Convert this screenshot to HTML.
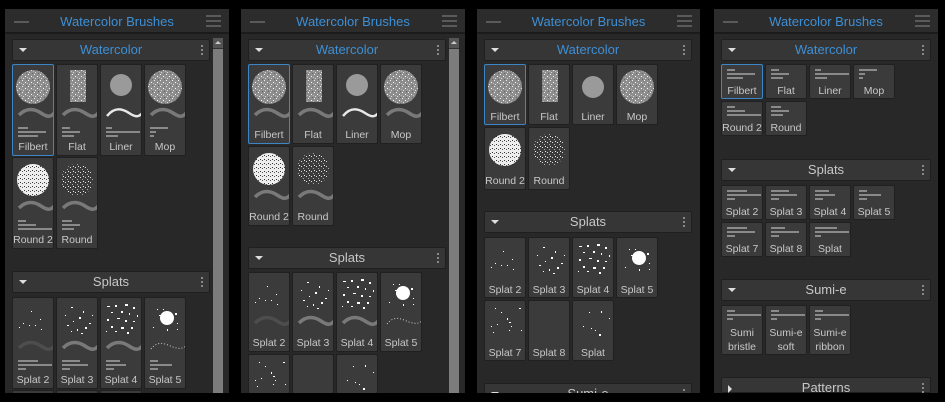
<!DOCTYPE html>
<html style="overflow:hidden;width:945px;height:402px"><head><meta charset="utf-8"><style>
*{margin:0;padding:0;box-sizing:border-box}
body{width:945px;height:402px;background:#000;position:relative;overflow:hidden;font-family:"Liberation Sans","DejaVu Sans",sans-serif}
.p{position:absolute;top:9px;height:384px;background:#282828;overflow:hidden}
.tb{position:absolute;left:0;right:0;top:0;height:25px;background:#2c2c2c;border-bottom:2px solid #1b1b1b}
.tt{position:absolute;left:0;right:0;top:5px;text-align:center;color:#3d8fd6;font-size:13px}
.mn{position:absolute;left:9px;top:12px;width:15px;height:2px;background:#5a5a5a}
.hm{position:absolute;right:8px;top:6px;width:15px;height:12px;border-top:2px solid #5a5a5a;border-bottom:2px solid #5a5a5a}
.hm:after{content:"";position:absolute;left:0;right:0;top:3px;height:2px;background:#5a5a5a}
.h{position:absolute;left:7px;height:22px;background:#363636;border:1px solid #1f1f1f;border-radius:2px;color:#c8c8c8;font-size:13px;text-align:center;line-height:20px}
.h.b{color:#3d8fd6}
.h i{position:absolute;left:6px;top:8px;width:0;height:0;border-left:4px solid transparent;border-right:4px solid transparent;border-top:4px solid #ddd}
.h i.r{border-top:4px solid transparent;border-bottom:4px solid transparent;border-left:4px solid #ddd;border-right:0;top:7px}
.h u{position:absolute;right:6px;top:5px;width:2px;height:2px;background:#888;box-shadow:0 4px #888,0 8px #888}
.t{position:absolute;width:42px;background:#3b3b3b;border:1px solid #202020;border-radius:2px;color:#c8c8c8;font-size:10.5px;text-align:center;overflow:hidden}
.t.s{border-color:#3a86c6}
.t svg{position:absolute;left:2px;top:3px}
.t .l{position:absolute;left:0;right:0;line-height:12px}
.ln{position:absolute;left:5px;width:36px;height:10px}
.ln b{display:block;height:2px;background:#8a8a8a;margin-bottom:2px}
.sb{position:absolute;width:10px;top:29px;bottom:0;background:#7c7c7c}
.sb:before{content:"";position:absolute;left:0;right:0;top:0;height:10px;background:#555;border-bottom:1px solid #333}
.sb:after{content:"";position:absolute;left:2px;top:3px;border-left:3px solid transparent;border-right:3px solid transparent;border-bottom:3px solid #ccc}
</style></head><body>
<svg width="0" height="0" style="position:absolute">
<defs>
<pattern id="n" width="6" height="6" patternUnits="userSpaceOnUse"><rect width="6" height="6" fill="#8d8d8d"/><rect x="1" y="0" width="1" height="1" fill="#eee"/><rect x="4" y="2" width="1" height="1" fill="#fff"/><rect x="2" y="4" width="1" height="1" fill="#ddd"/><rect x="5" y="5" width="1" height="1" fill="#666"/><rect x="0" y="3" width="1" height="1" fill="#bbb"/></pattern>
<pattern id="m" width="5" height="5" patternUnits="userSpaceOnUse"><rect width="5" height="5" fill="#3b3b3b"/><rect x="1" y="1" width="1" height="1" fill="#ddd"/><rect x="3" y="3" width="1" height="1" fill="#aaa"/><rect x="4" y="0" width="1" height="1" fill="#eee"/></pattern>
<pattern id="w" width="4" height="4" patternUnits="userSpaceOnUse"><rect width="4" height="4" fill="#eee"/><rect x="1" y="1" width="1" height="1" fill="#333"/><rect x="3" y="2" width="1" height="1" fill="#555"/></pattern>
<symbol id="wv"><path d="M4 9 C12 1,20 3,26 7 S36 12,40 6" stroke="#8a8a8a" stroke-width="3.5" fill="none" opacity=".8"/></symbol>
<symbol id="wc"><path d="M4 10 C12 0,20 3,26 7 S36 12,40 6" stroke="#e8e8e8" stroke-width="2.5" fill="none"/></symbol>
<symbol id="d2"><g fill="#fff"><rect x="16" y="10" width="1" height="1"/><rect x="8" y="22" width="1" height="1"/><rect x="14" y="24" width="1" height="1"/><rect x="25" y="18" width="1" height="1"/><rect x="26" y="28" width="1" height="1"/><rect x="4" y="26" width="1" height="1"/><rect x="20" y="24" width="1" height="1"/></g></symbol>
<symbol id="d3"><g fill="#fff"><rect x="12" y="6" width="2" height="1"/><rect x="24" y="10" width="1" height="2"/><rect x="6" y="14" width="1" height="1"/><rect x="20" y="16" width="2" height="2"/><rect x="14" y="20" width="1" height="1"/><rect x="30" y="22" width="2" height="1"/><rect x="8" y="24" width="2" height="1"/><rect x="26" y="26" width="2" height="2"/><rect x="18" y="28" width="1" height="2"/><rect x="12" y="30" width="1" height="1"/><rect x="33" y="14" width="1" height="1"/><rect x="22" y="32" width="2" height="1"/></g></symbol>
<symbol id="d4"><g fill="#fff"><rect x="4" y="5" width="3" height="1"/><rect x="12" y="4" width="2" height="2"/><rect x="22" y="3" width="3" height="2"/><rect x="30" y="6" width="2" height="2"/><rect x="8" y="11" width="2" height="1"/><rect x="18" y="10" width="2" height="2"/><rect x="26" y="12" width="1" height="2"/><rect x="34" y="14" width="1" height="2"/><rect x="4" y="18" width="2" height="2"/><rect x="14" y="17" width="3" height="1"/><rect x="22" y="19" width="2" height="2"/><rect x="30" y="20" width="2" height="1"/><rect x="8" y="25" width="2" height="2"/><rect x="18" y="26" width="3" height="2"/><rect x="28" y="26" width="2" height="2"/><rect x="12" y="30" width="2" height="1"/><rect x="24" y="31" width="2" height="2"/><rect x="3" y="30" width="1" height="1"/></g></symbol>
<symbol id="d5"><g fill="#fff"><circle cx="20" cy="17" r="7"/><rect x="10" y="8" width="1" height="1"/><rect x="28" y="12" width="2" height="2"/><rect x="12" y="14" width="2" height="1"/><rect x="30" y="22" width="1" height="1"/><rect x="6" y="26" width="1" height="1"/><rect x="20" y="28" width="1" height="2"/><rect x="30" y="28" width="1" height="1"/><rect x="16" y="8" width="1" height="1"/></g></symbol>
<symbol id="d7"><g fill="#fff"><rect x="8" y="4" width="1" height="1"/><rect x="32" y="4" width="2" height="1"/><rect x="14" y="8" width="1" height="1"/><rect x="20" y="14" width="1" height="2"/><rect x="22" y="18" width="2" height="1"/><rect x="10" y="20" width="1" height="1"/><rect x="4" y="22" width="1" height="1"/><rect x="24" y="22" width="1" height="1"/><rect x="22" y="26" width="1" height="1"/><rect x="34" y="26" width="1" height="1"/><rect x="6" y="28" width="1" height="1"/></g></symbol>
<symbol id="d1"><g fill="#fff"><rect x="14" y="8" width="1" height="1"/><rect x="26" y="7" width="1" height="2"/><rect x="34" y="14" width="1" height="1"/><rect x="8" y="22" width="1" height="1"/><rect x="16" y="24" width="1" height="1"/><rect x="20" y="26" width="1" height="1"/><rect x="24" y="30" width="2" height="2"/></g></symbol>
</defs></svg>

<!-- PANEL 1 -->
<div class="p" style="left:5px;width:224px">
<div class="tb"><div class="mn"></div><div class="tt">Watercolor Brushes</div><div class="hm"></div></div>
<div class="h b" style="top:30px;width:198px"><i></i>Watercolor<u></u></div>
<div class="sb" style="left:208px"></div>
<div class="t s" style="left:7px;top:55px;height:92px"><svg width="38" height="56"><circle cx="18" cy="19" r="17" fill="url(#n)"/><use href="#wv" y="38"/></svg><div class="ln" style="top:62px"><b style="width:10px"></b><b style="width:28px"></b><b style="width:20px"></b></div><div class="l" style="top:76px">Filbert</div></div>
<div class="t" style="left:51px;top:55px;height:92px"><svg width="38" height="56"><rect x="11" y="2" width="16" height="32" fill="url(#n)"/><use href="#wv" y="38"/></svg><div class="ln" style="top:62px"><b style="width:8px"></b><b style="width:18px"></b><b style="width:12px"></b></div><div class="l" style="top:76px">Flat</div></div>
<div class="t" style="left:95px;top:55px;height:92px"><svg width="38" height="56"><circle cx="18" cy="17" r="11" fill="#9a9a9a"/><use href="#wc" y="38"/></svg><div class="ln" style="top:62px"><b style="width:6px"></b><b style="width:34px"></b><b style="width:12px"></b></div><div class="l" style="top:76px">Liner</div></div>
<div class="t" style="left:139px;top:55px;height:92px"><svg width="38" height="56"><circle cx="18" cy="19" r="17" fill="url(#n)"/><use href="#wv" y="38"/></svg><div class="ln" style="top:62px"><b style="width:18px"></b><b style="width:6px"></b><b style="width:4px"></b></div><div class="l" style="top:76px">Mop</div></div>
<div class="t" style="left:7px;top:148px;height:92px"><svg width="38" height="56"><circle cx="18" cy="19" r="16" fill="url(#w)"/><use href="#wv" y="38"/></svg><div class="ln" style="top:62px"><b style="width:8px"></b><b style="width:18px"></b><b style="width:34px"></b></div><div class="l" style="top:76px">Round 2</div></div>
<div class="t" style="left:51px;top:148px;height:92px"><svg width="38" height="56"><circle cx="18" cy="19" r="16" fill="url(#m)"/><use href="#wv" y="38"/></svg><div class="ln" style="top:62px"><b style="width:10px"></b><b style="width:18px"></b><b style="width:12px"></b></div><div class="l" style="top:76px">Round</div></div>
<div class="h" style="top:262px;width:198px"><i></i>Splats<u></u></div>
<div class="t" style="left:7px;top:288px;height:92px"><svg width="38" height="56"><use href="#d2"/><use href="#wv" y="38" opacity=".3"/></svg><div class="ln" style="top:62px"><b style="width:20px"></b><b style="width:34px"></b><b style="width:8px"></b></div><div class="l" style="top:76px">Splat 2</div></div>
<div class="t" style="left:51px;top:288px;height:92px"><svg width="38" height="56"><use href="#d3"/><use href="#wv" y="38"/></svg><div class="ln" style="top:62px"><b style="width:18px"></b><b style="width:26px"></b><b style="width:8px"></b></div><div class="l" style="top:76px">Splat 3</div></div>
<div class="t" style="left:95px;top:288px;height:92px"><svg width="38" height="56"><use href="#d4"/><use href="#wv" y="38"/></svg><div class="ln" style="top:62px"><b style="width:14px"></b><b style="width:20px"></b><b style="width:8px"></b></div><div class="l" style="top:76px">Splat 4</div></div>
<div class="t" style="left:139px;top:288px;height:92px"><svg width="38" height="56"><use href="#d5"/><path d="M4 48 C12 38,20 44,26 46 S36 48,40 44" stroke="#ccc" stroke-dasharray="1 2" fill="none"/></svg><div class="ln" style="top:62px"><b style="width:8px"></b><b style="width:22px"></b><b style="width:8px"></b></div><div class="l" style="top:76px">Splat 5</div></div>
<div class="t" style="left:7px;top:381px;height:10px"></div><div class="t" style="left:51px;top:381px;height:10px"></div><div class="t" style="left:95px;top:381px;height:10px"></div>
</div>

<!-- PANEL 2 -->
<div class="p" style="left:241px;width:224px">
<div class="tb"><div class="mn"></div><div class="tt">Watercolor Brushes</div><div class="hm"></div></div>
<div class="h b" style="top:30px;width:198px"><i></i>Watercolor<u></u></div>
<div class="sb" style="left:208px"></div>
<div class="t s" style="left:7px;top:55px;height:80px"><svg width="38" height="56"><circle cx="18" cy="19" r="17" fill="url(#n)"/><use href="#wv" y="38"/></svg><div class="l" style="top:64px">Filbert</div></div>
<div class="t" style="left:51px;top:55px;height:80px"><svg width="38" height="56"><rect x="11" y="2" width="16" height="32" fill="url(#n)"/><use href="#wv" y="38"/></svg><div class="l" style="top:64px">Flat</div></div>
<div class="t" style="left:95px;top:55px;height:80px"><svg width="38" height="56"><circle cx="18" cy="17" r="11" fill="#9a9a9a"/><use href="#wc" y="38"/></svg><div class="l" style="top:64px">Liner</div></div>
<div class="t" style="left:139px;top:55px;height:80px"><svg width="38" height="56"><circle cx="18" cy="19" r="17" fill="url(#n)"/><use href="#wv" y="38"/></svg><div class="l" style="top:64px">Mop</div></div>
<div class="t" style="left:7px;top:137px;height:80px"><svg width="38" height="56"><circle cx="18" cy="19" r="16" fill="url(#w)"/><use href="#wv" y="38"/></svg><div class="l" style="top:64px">Round 2</div></div>
<div class="t" style="left:51px;top:137px;height:80px"><svg width="38" height="56"><circle cx="18" cy="19" r="16" fill="url(#m)"/><use href="#wv" y="38"/></svg><div class="l" style="top:64px">Round</div></div>
<div class="h" style="top:238px;width:198px"><i></i>Splats<u></u></div>
<div class="t" style="left:7px;top:263px;height:80px"><svg width="38" height="56"><use href="#d2"/><use href="#wv" y="38" opacity=".3"/></svg><div class="l" style="top:64px">Splat 2</div></div>
<div class="t" style="left:51px;top:263px;height:80px"><svg width="38" height="56"><use href="#d3"/><use href="#wv" y="38"/></svg><div class="l" style="top:64px">Splat 3</div></div>
<div class="t" style="left:95px;top:263px;height:80px"><svg width="38" height="56"><use href="#d4"/><use href="#wv" y="38"/></svg><div class="l" style="top:64px">Splat 4</div></div>
<div class="t" style="left:139px;top:263px;height:80px"><svg width="38" height="56"><use href="#d5"/><path d="M4 48 C12 38,20 44,26 46 S36 48,40 44" stroke="#ccc" stroke-dasharray="1 2" fill="none"/></svg><div class="l" style="top:64px">Splat 5</div></div>
<div class="t" style="left:7px;top:345px;height:40px"><svg width="38" height="36"><use href="#d7"/></svg></div>
<div class="t" style="left:51px;top:345px;height:40px"></div>
<div class="t" style="left:95px;top:345px;height:40px"><svg width="38" height="36"><use href="#d1"/></svg></div>
</div>

<!-- PANEL 3 -->
<div class="p" style="left:477px;width:223px">
<div class="tb"><div class="mn"></div><div class="tt">Watercolor Brushes</div><div class="hm"></div></div>
<div class="h b" style="top:30px;width:208px"><i></i>Watercolor<u></u></div>
<div class="t s" style="left:7px;top:55px;height:61px"><svg width="38" height="40"><circle cx="18" cy="19" r="17" fill="url(#n)"/></svg><div class="l" style="top:46px">Filbert</div></div>
<div class="t" style="left:51px;top:55px;height:61px"><svg width="38" height="40"><rect x="11" y="2" width="16" height="32" fill="url(#n)"/></svg><div class="l" style="top:46px">Flat</div></div>
<div class="t" style="left:95px;top:55px;height:61px"><svg width="38" height="40"><circle cx="18" cy="19" r="11" fill="#9a9a9a"/></svg><div class="l" style="top:46px">Liner</div></div>
<div class="t" style="left:139px;top:55px;height:61px"><svg width="38" height="40"><circle cx="18" cy="19" r="17" fill="url(#n)"/></svg><div class="l" style="top:46px">Mop</div></div>
<div class="t" style="left:7px;top:118px;height:63px"><svg width="38" height="40"><circle cx="18" cy="19" r="16" fill="url(#w)"/></svg><div class="l" style="top:47px">Round 2</div></div>
<div class="t" style="left:51px;top:118px;height:63px"><svg width="38" height="40"><circle cx="18" cy="19" r="16" fill="url(#m)"/></svg><div class="l" style="top:47px">Round</div></div>
<div class="h" style="top:202px;width:208px"><i></i>Splats<u></u></div>
<div class="t" style="left:7px;top:228px;height:61px"><svg width="38" height="40"><use href="#d2"/></svg><div class="l" style="top:46px">Splat 2</div></div>
<div class="t" style="left:51px;top:228px;height:61px"><svg width="38" height="40"><use href="#d3"/></svg><div class="l" style="top:46px">Splat 3</div></div>
<div class="t" style="left:95px;top:228px;height:61px"><svg width="38" height="40"><use href="#d4"/></svg><div class="l" style="top:46px">Splat 4</div></div>
<div class="t" style="left:139px;top:228px;height:61px"><svg width="38" height="40"><use href="#d5"/></svg><div class="l" style="top:46px">Splat 5</div></div>
<div class="t" style="left:7px;top:291px;height:61px"><svg width="38" height="40"><use href="#d7"/></svg><div class="l" style="top:46px">Splat 7</div></div>
<div class="t" style="left:51px;top:291px;height:61px"><div class="l" style="top:46px">Splat 8</div></div>
<div class="t" style="left:95px;top:291px;height:61px"><svg width="38" height="40"><use href="#d1"/></svg><div class="l" style="top:46px">Splat</div></div>
<div class="h" style="top:374px;width:208px"><i></i>Sumi-e<u></u></div>
</div>

<!-- PANEL 4 -->
<div class="p" style="left:714px;width:224px">
<div class="tb"><div class="mn"></div><div class="tt">Watercolor Brushes</div><div class="hm"></div></div>
<div class="h b" style="top:30px;width:210px"><i></i>Watercolor<u></u></div>
<div class="t s" style="left:7px;top:55px;height:35px"><div class="ln" style="top:4px"><b style="width:8px"></b><b style="width:28px"></b><b style="width:16px"></b></div><div class="l" style="top:20px">Filbert</div></div>
<div class="t" style="left:51px;top:55px;height:35px"><div class="ln" style="top:4px"><b style="width:8px"></b><b style="width:18px"></b><b style="width:12px"></b></div><div class="l" style="top:20px">Flat</div></div>
<div class="t" style="left:95px;top:55px;height:35px"><div class="ln" style="top:4px"><b style="width:6px"></b><b style="width:34px"></b><b style="width:12px"></b></div><div class="l" style="top:20px">Liner</div></div>
<div class="t" style="left:139px;top:55px;height:35px"><div class="ln" style="top:4px"><b style="width:18px"></b><b style="width:6px"></b><b style="width:4px"></b></div><div class="l" style="top:20px">Mop</div></div>
<div class="t" style="left:7px;top:92px;height:35px"><div class="ln" style="top:4px"><b style="width:8px"></b><b style="width:18px"></b><b style="width:34px"></b></div><div class="l" style="top:20px">Round 2</div></div>
<div class="t" style="left:51px;top:92px;height:35px"><div class="ln" style="top:4px"><b style="width:10px"></b><b style="width:18px"></b><b style="width:12px"></b></div><div class="l" style="top:20px">Round</div></div>
<div class="h" style="top:150px;width:210px"><i></i>Splats<u></u></div>
<div class="t" style="left:7px;top:176px;height:35px"><div class="ln" style="top:4px"><b style="width:20px"></b><b style="width:34px"></b><b style="width:8px"></b></div><div class="l" style="top:20px">Splat 2</div></div>
<div class="t" style="left:51px;top:176px;height:35px"><div class="ln" style="top:4px"><b style="width:18px"></b><b style="width:26px"></b><b style="width:8px"></b></div><div class="l" style="top:20px">Splat 3</div></div>
<div class="t" style="left:95px;top:176px;height:35px"><div class="ln" style="top:4px"><b style="width:14px"></b><b style="width:20px"></b><b style="width:8px"></b></div><div class="l" style="top:20px">Splat 4</div></div>
<div class="t" style="left:139px;top:176px;height:35px"><div class="ln" style="top:4px"><b style="width:8px"></b><b style="width:22px"></b><b style="width:8px"></b></div><div class="l" style="top:20px">Splat 5</div></div>
<div class="t" style="left:7px;top:213px;height:35px"><div class="ln" style="top:4px"><b style="width:20px"></b><b style="width:28px"></b><b style="width:8px"></b></div><div class="l" style="top:20px">Splat 7</div></div>
<div class="t" style="left:51px;top:213px;height:35px"><div class="ln" style="top:4px"><b style="width:14px"></b><b style="width:28px"></b><b style="width:8px"></b></div><div class="l" style="top:20px">Splat 8</div></div>
<div class="t" style="left:95px;top:213px;height:35px"><div class="ln" style="top:4px"><b style="width:22px"></b><b style="width:34px"></b><b style="width:6px"></b></div><div class="l" style="top:20px">Splat</div></div>
<div class="h" style="top:270px;width:210px"><i></i>Sumi-e<u></u></div>
<div class="t" style="left:7px;top:296px;height:50px"><div class="ln" style="top:4px"><b style="width:8px"></b><b style="width:34px"></b><b style="width:6px"></b></div><div class="l" style="top:20px;line-height:14px">Sumi<br>bristle</div></div>
<div class="t" style="left:51px;top:296px;height:50px"><div class="ln" style="top:4px"><b style="width:8px"></b><b style="width:34px"></b><b style="width:6px"></b></div><div class="l" style="top:20px;line-height:14px">Sumi-e<br>soft</div></div>
<div class="t" style="left:95px;top:296px;height:50px"><div class="ln" style="top:4px"><b style="width:8px"></b><b style="width:34px"></b><b style="width:6px"></b></div><div class="l" style="top:20px;line-height:14px">Sumi-e<br>ribbon</div></div>
<div class="h" style="top:368px;width:210px;height:16px"><i class="r"></i>Patterns<u></u></div>
</div>
</body></html>
